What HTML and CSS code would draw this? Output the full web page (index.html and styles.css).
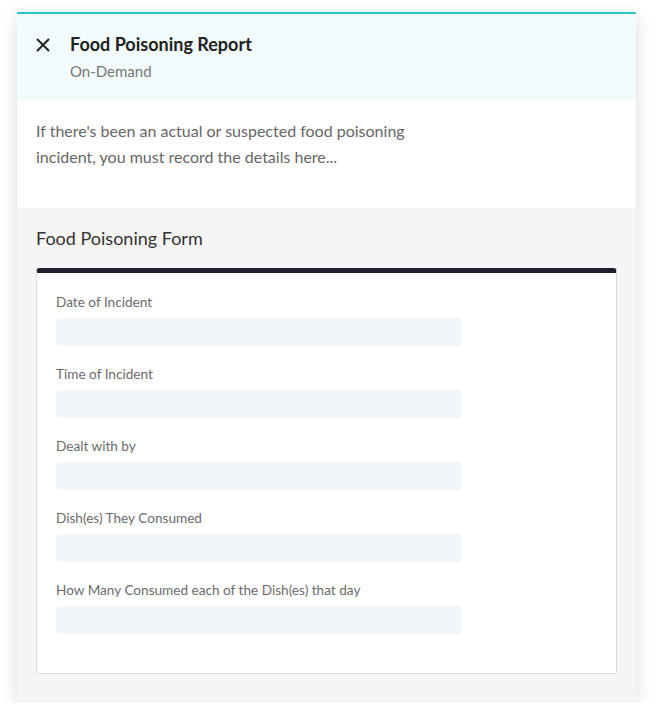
FILE: index.html
```html
<!DOCTYPE html>
<html lang="en">
<head>
  <meta charset="UTF-8">
  <title>Food Poisoning Report</title>
  <link rel="stylesheet" href="styles.css">
</head>
<body>
  <div class="panel">
    <div class="panel-head">
      <button class="close" aria-label="Close">
        <svg width="14" height="14" viewBox="0 0 14 14"><path d="M1 1L13 13M13 1L1 13" stroke="#222" stroke-width="2" fill="none"/></svg>
      </button>
      <div>
        <div class="title">Food Poisoning Report</div>
        <div class="subtitle">On-Demand</div>
      </div>
    </div>

    <div class="intro">
      <p>If there's been an actual or suspected food poisoning<br>incident, you must record the details here...</p>
    </div>

    <div class="form-area">
      <h3>Food Poisoning Form</h3>
      <div class="form-card">
        <div class="field">
          <label>Date of Incident</label>
          <div class="input"></div>
        </div>
        <div class="field">
          <label>Time of Incident</label>
          <div class="input"></div>
        </div>
        <div class="field">
          <label>Dealt with by</label>
          <div class="input"></div>
        </div>
        <div class="field">
          <label>Dish(es) They Consumed</label>
          <div class="input"></div>
        </div>
        <div class="field">
          <label>How Many Consumed each of the Dish(es) that day</label>
          <div class="input"></div>
        </div>
      </div>
    </div>
  </div>
</body>
</html>
```

FILE: styles.css
```css
body {
  margin: 0;
  background: #fff;
  font-family: Lato, "Open Sans", sans-serif;
}
.panel {
  width: 619px;
  margin: 12px 0 0 17px;
  border-top: 2px solid #2cc1cc;
  box-shadow: 0 4px 16px rgba(0, 0, 0, 0.14);
}
.panel-head {
  display: flex;
  align-items: flex-start;
  gap: 20px;
  height: 86px;
  box-sizing: border-box;
  padding: 19px 19px;
  background: #f2fcfc;
}
.close {
  border: 0;
  background: none;
  padding: 0;
  margin-top: 5px;
  width: 14px;
  height: 14px;
  cursor: pointer;
}
.title {
  font-size: 18px;
  font-weight: 700;
  color: #222;
  line-height: 22px;
}
.subtitle {
  margin-top: 7px;
  font-size: 15px;
  color: #777;
  line-height: 18px;
}
.intro {
  height: 108px;
  box-sizing: border-box;
  padding: 18px 19px 0;
  background: #fff;
}
.intro p {
  margin: 0;
  font-size: 16px;
  line-height: 26px;
  color: #666;
}
.form-area {
  background: #f5f5f5;
  padding: 18px 19px 29px;
}
.form-area h3 {
  margin: 0 0 18px;
  font-size: 18px;
  font-weight: 400;
  line-height: 24px;
  color: #333;
}
.form-card {
  background: #fff;
  border: 1px solid #ddd;
  border-top: 5px solid #1f1f2f;
  border-radius: 4px 4px 2px 2px;
  padding: 20px 19px 20px;
}
.field {
  margin-bottom: 19px;
}
.field label {
  display: block;
  font-size: 13.6px;
  line-height: 18px;
  color: #6b6b6b;
  margin-bottom: 7px;
}
.input {
  width: 406px;
  height: 28px;
  background: #f2f5fa;
  border-radius: 3px;
}
```
